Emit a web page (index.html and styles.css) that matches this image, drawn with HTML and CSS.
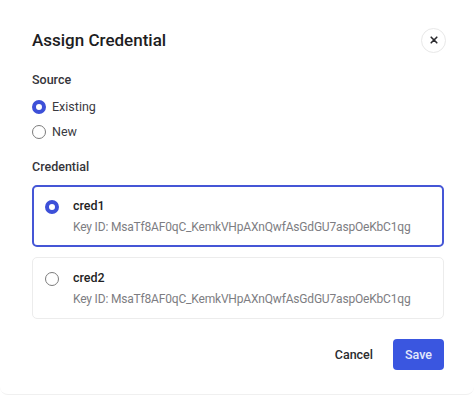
FILE: index.html
```html
<!DOCTYPE html>
<html>
<head>
<meta charset="utf-8">
<link rel="stylesheet" href="styles.css">
</head>
<body>
<div class="dialog">
  <div class="header">
    <h1 class="title">Assign Credential</h1>
    <button class="close" aria-label="Close">
      <svg width="8" height="8" viewBox="0 0 10 10"><path d="M1.5 1.5L8.5 8.5M8.5 1.5L1.5 8.5" stroke="#2a2a2e" stroke-width="2" stroke-linecap="round"/></svg>
    </button>
  </div>
  <div class="section">
    <div class="label">Source</div>
    <div class="options">
      <label class="option"><span class="radio checked"></span><span>Existing</span></label>
      <label class="option"><span class="radio"></span><span>New</span></label>
    </div>
  </div>
  <div class="section cred-section">
    <div class="label">Credential</div>
    <div class="cards">
      <div class="card selected">
        <span class="radio checked"></span>
        <div class="card-body">
          <div class="card-name">cred1</div>
          <div class="card-key">Key ID: MsaTf8AF0qC_KemkVHpAXnQwfAsGdGU7aspOeKbC1qg</div>
        </div>
      </div>
      <div class="card">
        <span class="radio"></span>
        <div class="card-body">
          <div class="card-name">cred2</div>
          <div class="card-key">Key ID: MsaTf8AF0qC_KemkVHpAXnQwfAsGdGU7aspOeKbC1qg</div>
        </div>
      </div>
    </div>
  </div>
  <div class="footer">
    <button class="btn cancel">Cancel</button>
    <button class="btn save">Save</button>
  </div>
</div>
</body>
</html>
```
FILE: styles.css
```css
* { box-sizing: border-box; }
html, body { margin: 0; padding: 0; background: #fff; }
body {
  font-family: Roboto, "Liberation Sans", Arial, sans-serif;
  color: #1f1f24;
  width: 474px;
  height: 396px;
  overflow: hidden;
}
.dialog {
  width: 474px;
  height: 395px;
  padding: 28px 30px 0 32px;
  border-bottom: 1px solid #f0f0f0;
  border-radius: 0 0 8px 8px;
}
.header {
  display: flex;
  align-items: center;
  justify-content: space-between;
  height: 24px;
}
.title {
  margin: 0;
  font-size: 17px;
  font-weight: 500;
  line-height: 24px;
  color: #1d1d22;
}
.close {
  width: 25px;
  height: 25px;
  border-radius: 50%;
  border: 1px solid #e8e8e8;
  background: #fff;
  display: flex;
  align-items: center;
  justify-content: center;
  padding: 0;
  margin-right: -2px;
}
.section { margin-top: 19px; }
.label {
  font-size: 12.5px;
  font-weight: 500;
  color: #35353a;
  line-height: 18px;
}
.options { margin-top: 5px; }
.option {
  display: flex;
  align-items: center;
  gap: 6px;
  height: 25px;
  font-size: 12.5px;
  color: #3a3a3f;
}
.radio {
  width: 14px;
  height: 14px;
  border-radius: 50%;
  border: 1.5px solid #7c7c7c;
  background: #fff;
  flex: none;
}
.radio.checked {
  border: 4px solid #3d50d8;
}
.cred-section { margin-top: 14px; }
.cards {
  margin-top: 9px;
  display: flex;
  flex-direction: column;
  gap: 10px;
  width: 412px;
}
.card {
  display: flex;
  align-items: flex-start;
  gap: 14px;
  border: 1px solid #ececec;
  border-radius: 5px;
  padding: 11px 11px 11px 12px;
  height: 62px;
}
.card .radio { margin-top: 3px; }
.card.selected {
  border: 2px solid #4556d6;
  padding: 10px 10px 10px 11px;
}
.card-name {
  font-size: 12.5px;
  font-weight: 500;
  color: #1f1f24;
  line-height: 18px;
}
.card-key {
  margin-top: 3px;
  font-size: 12px;
  letter-spacing: -0.18px;
  color: #7d7d82;
  line-height: 18px;
  white-space: nowrap;
}
.footer {
  display: flex;
  justify-content: flex-end;
  align-items: center;
  gap: 20px;
  margin-top: 20px;
  width: 412px;
}
.btn {
  font-family: inherit;
  font-size: 12.5px;
  font-weight: 500;
  border: none;
  border-radius: 4px;
  height: 31px;
  cursor: pointer;
}
.cancel {
  background: transparent;
  color: #2b2b2f;
  padding: 0;
}
.save {
  background: #3a56e0;
  color: #e4e9fc;
  width: 51px;
}
```
